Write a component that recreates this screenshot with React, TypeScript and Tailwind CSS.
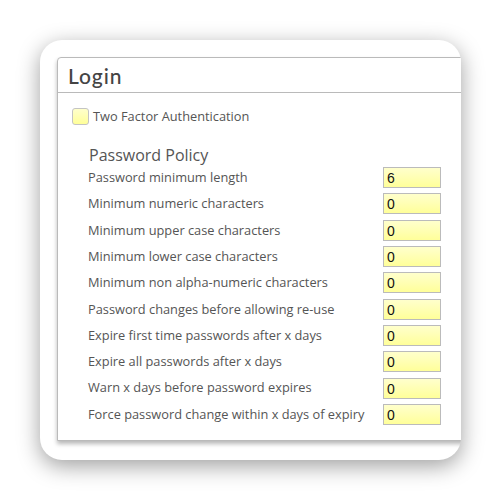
import React from 'react';

const rows: { label: string; value: string }[] = [
  { label: 'Password minimum length', value: '6' },
  { label: 'Minimum numeric characters', value: '0' },
  { label: 'Minimum upper case characters', value: '0' },
  { label: 'Minimum lower case characters', value: '0' },
  { label: 'Minimum non alpha-numeric characters', value: '0' },
  { label: 'Password changes before allowing re-use', value: '0' },
  { label: 'Expire first time passwords after x days', value: '0' },
  { label: 'Expire all passwords after x days', value: '0' },
  { label: 'Warn x days before password expires', value: '0' },
  { label: 'Force password change within x days of expiry', value: '0' },
];

const App: React.FC = () => {
  return (
    <div className="w-[502px] h-[500px] bg-white pt-10 pl-10 font-['Open_Sans',sans-serif]">
      <div className="w-[421px] h-[420px] rounded-[22px] bg-white shadow-[0_6px_22px_rgba(0,0,0,0.38)] overflow-hidden pt-[17px] pl-[17px]">
        <div className="w-[430px] h-[384px] border border-[#bababa] rounded-tl-[4px] bg-white shadow-[0_3px_4px_rgba(0,0,0,0.28)]">
          <div className="h-[35px] border-b border-[#bababa] pl-[10px] pt-[4px] text-[21px] leading-[27px] text-[#444] font-['Lato',sans-serif] font-medium tracking-[0.9px]">
            Login
          </div>
          <div className="flex items-center pl-[14px] pt-[14px]">
            <div className="w-[17px] h-[17px] rounded-[3px] border border-[#c4c4c4] bg-gradient-to-b from-[#ffffcc] to-[#ffff99]" />
            <span className="ml-[4px] text-[12.8px] text-[#555]">Two Factor Authentication</span>
          </div>
          <div className="pl-[31px] pt-[18px] text-[16px] leading-[22px] text-[#555]">Password Policy</div>
          <div className="flex flex-col gap-[5.3px] pl-[30px] pt-[1px]">
            {rows.map((r) => (
              <div key={r.label} className="flex items-center h-[21px]">
                <span className="w-[295px] text-[12.8px] text-[#555]">{r.label}</span>
                <div className="w-[58px] h-[21px] border border-[#bbbbbb] bg-gradient-to-b from-[#ffffcc] to-[#ffff99] pl-[3px] text-[14px] leading-[20px] text-[#111] font-['Liberation_Sans',sans-serif] font-normal">
                  {r.value}
                </div>
              </div>
            ))}
          </div>
        </div>
      </div>
    </div>
  );
};

export default App;
